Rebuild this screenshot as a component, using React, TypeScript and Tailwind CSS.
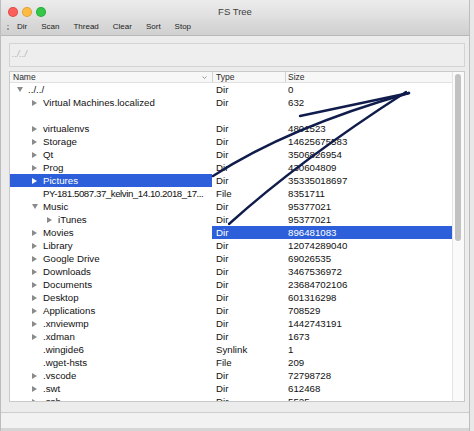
import clsx from "clsx";

type Row = {
  name: string;
  type: string;
  size: string;
  level: 0 | 1 | 2;
  arrow: "down" | "right" | "none";
  sel?: "name" | "rest";
  tight?: boolean;
};

const rows: Row[] = [
  { name: "../../", type: "Dir", size: "0", level: 0, arrow: "down" },
  { name: "Virtual Machines.localized", type: "Dir", size: "632", level: 1, arrow: "right" },
  { name: "", type: "", size: "", level: 1, arrow: "none" },
  { name: "virtualenvs", type: "Dir", size: "4801523", level: 1, arrow: "right" },
  { name: "Storage", type: "Dir", size: "14625675583", level: 1, arrow: "right" },
  { name: "Qt", type: "Dir", size: "3506826954", level: 1, arrow: "right" },
  { name: "Prog", type: "Dir", size: "430604809", level: 1, arrow: "right" },
  { name: "Pictures", type: "Dir", size: "35335018697", level: 1, arrow: "right", sel: "name" },
  { name: "PY-181.5087.37_kelvin_14.10.2018_17...", type: "File", size: "8351711", level: 1, arrow: "none", tight: true },
  { name: "Music", type: "Dir", size: "95377021", level: 1, arrow: "down" },
  { name: "iTunes", type: "Dir", size: "95377021", level: 2, arrow: "right" },
  { name: "Movies", type: "Dir", size: "896481083", level: 1, arrow: "right", sel: "rest" },
  { name: "Library", type: "Dir", size: "12074289040", level: 1, arrow: "right" },
  { name: "Google Drive", type: "Dir", size: "69026535", level: 1, arrow: "right" },
  { name: "Downloads", type: "Dir", size: "3467536972", level: 1, arrow: "right" },
  { name: "Documents", type: "Dir", size: "23684702106", level: 1, arrow: "right" },
  { name: "Desktop", type: "Dir", size: "601316298", level: 1, arrow: "right" },
  { name: "Applications", type: "Dir", size: "708529", level: 1, arrow: "right" },
  { name: ".xnviewmp", type: "Dir", size: "1442743191", level: 1, arrow: "right" },
  { name: ".xdman", type: "Dir", size: "1673", level: 1, arrow: "right" },
  { name: ".wingide6", type: "Synlink", size: "1", level: 1, arrow: "none" },
  { name: ".wget-hsts", type: "File", size: "209", level: 1, arrow: "none" },
  { name: ".vscode", type: "Dir", size: "72798728", level: 1, arrow: "right" },
  { name: ".swt", type: "Dir", size: "612468", level: 1, arrow: "right" },
  { name: ".ssh", type: "Dir", size: "5525", level: 1, arrow: "right" },
];

const indent = { 0: "pl-[7px]", 1: "pl-[22px]", 2: "pl-[37px]" };

function Arrow({ dir, white }: { dir: Row["arrow"]; white?: boolean }) {
  const fill = white ? "#ffffff" : "#8a8a8a";
  if (dir === "right")
    return (
      <svg width="5" height="6" viewBox="0 0 5 6">
        <polygon points="0,0 5,3 0,6" fill={fill} />
      </svg>
    );
  if (dir === "down")
    return (
      <svg width="6" height="5" viewBox="0 0 6 5">
        <polygon points="0,0 6,0 3,5" fill={fill} />
      </svg>
    );
  return null;
}

function TreeRow({ row }: { row: Row }) {
  const selName = row.sel === "name";
  const selRest = row.sel === "rest";
  return (
    <div className="flex h-[13px] shrink-0 text-[9.7px] leading-[13px] text-[#111]">
      <div
        className={clsx(
          "flex w-[202px] shrink-0 items-center overflow-hidden",
          indent[row.level],
          selName && "bg-[#2c5fd9] text-white"
        )}
      >
        <span className="flex w-[11px] shrink-0 items-center">
          <Arrow dir={row.arrow} white={selName} />
        </span>
        <span className={clsx("min-w-0 whitespace-nowrap", row.tight && "tracking-[-0.45px]")}>{row.name}</span>
      </div>
      <div className={clsx("flex flex-1", selRest && "bg-[#2c5fd9] text-white")}>
        <div className="w-[73px] shrink-0 pl-[4px]">{row.type}</div>
        <div className="flex-1 pl-[3px]">{row.size}</div>
      </div>
    </div>
  );
}

const tools = ["Dir", "Scan", "Thread", "Clear", "Sort", "Stop"];

export default function App() {
  return (
    <div className="relative flex h-[431px] w-[474px] overflow-hidden bg-[#e8e8e8] font-['Liberation_Sans',Arial,sans-serif]">
      <div className="flex h-full w-[470px] flex-col border-x border-[#bdbdbd] bg-[#ececec]">
        {/* title bar */}
        <div className="relative flex h-[19px] shrink-0 items-center bg-gradient-to-b from-[#ececec] to-[#dedede] pt-[4px]">
          <div className="flex items-center gap-[6px] pl-[8px]">
            <span className="h-[8px] w-[8px] rounded-full bg-[#fc605c] ring-1 ring-[#de4a46]" />
            <span className="h-[8px] w-[8px] rounded-full bg-[#fdbc40] ring-1 ring-[#dea236]" />
            <span className="h-[8px] w-[8px] rounded-full bg-[#34c84a] ring-1 ring-[#27aa35]" />
          </div>
          <div className="absolute inset-x-0 top-[4px] text-center text-[9.5px] leading-[15px] text-[#404040]">
            FS Tree
          </div>
        </div>
        {/* toolbar */}
        <div className="flex h-[17px] shrink-0 items-center border-b border-[#b8b8b8] bg-gradient-to-b from-[#dcdcdc] to-[#d0d0d0]">
          <div className="ml-[6px] flex w-[2px] flex-col gap-[2px]">
            <span className="h-[1.5px] w-[1.5px] bg-[#9a9a9a]" />
            <span className="h-[1.5px] w-[1.5px] bg-[#9a9a9a]" />
          </div>
          <div className="ml-[8px] flex gap-[14px] text-[8px] leading-[16px] text-[#222]">
            {tools.map((t) => (
              <span key={t}>{t}</span>
            ))}
          </div>
        </div>

        {/* content */}
        <div className="flex flex-1 flex-col pl-[8px] pr-[4px] pt-[7px]">
          <div className="flex h-[24px] shrink-0 items-center border border-[#d3d3d3] bg-[#eeeeee] pl-[2px] text-[9px] italic text-[#b3b3b3]">
            ../../
          </div>

          <div className="mt-[4px] flex h-[331px] shrink-0 border border-[#c9c9c9] bg-white">
            <div className="flex w-[442px] flex-col overflow-hidden">
              <div className="flex h-[11px] shrink-0 border-b border-[#e0e0e0] bg-[#f7f7f7] text-[8.5px] leading-[10px] text-[#2b2b2b]">
                <div className="flex w-[202px] shrink-0 items-center justify-between pl-[3px] pr-[5px]">
                  <span>Name</span>
                  <svg width="5" height="3" viewBox="0 0 5 3">
                    <polyline points="0.5,0.5 2.5,2.5 4.5,0.5" fill="none" stroke="#8a8a8a" strokeWidth="0.9" />
                  </svg>
                </div>
                <div className="flex w-[73px] shrink-0 items-center border-l border-[#d2d2d2] pl-[3px]">Type</div>
                <div className="flex flex-1 items-center border-l border-[#d2d2d2] pl-[2px]">Size</div>
              </div>
              {rows.map((r, i) => (
                <TreeRow key={i} row={r} />
              ))}
            </div>
            <div className="flex flex-1 flex-col border-l border-[#e4e4e4] bg-[#fafafa] pt-[2px]">
              <div className="ml-[2px] h-[167px] w-[6px] rounded-full bg-[#c2c2c2]" />
            </div>
          </div>
        </div>

        {/* status bar */}
        <div className="mt-[10px] h-[16px] shrink-0 border-t border-[#cdcdcd] bg-[#f2f2f2]" />
        <div className="h-[3px] shrink-0 bg-[#d6d6d6]" />
      </div>

      {/* hand-drawn annotation */}
      <svg className="pointer-events-none absolute left-0 top-0" width="474" height="431" viewBox="0 0 474 431">
        <g fill="none" stroke="#101d4c" strokeWidth="2.4" strokeLinecap="round">
          <path d="M409 93 Q289 127 213 176" />
          <path d="M406 92 Q300 160 229 224" />
          <path d="M409 93 L300 116" />
        </g>
      </svg>
    </div>
  );
}
